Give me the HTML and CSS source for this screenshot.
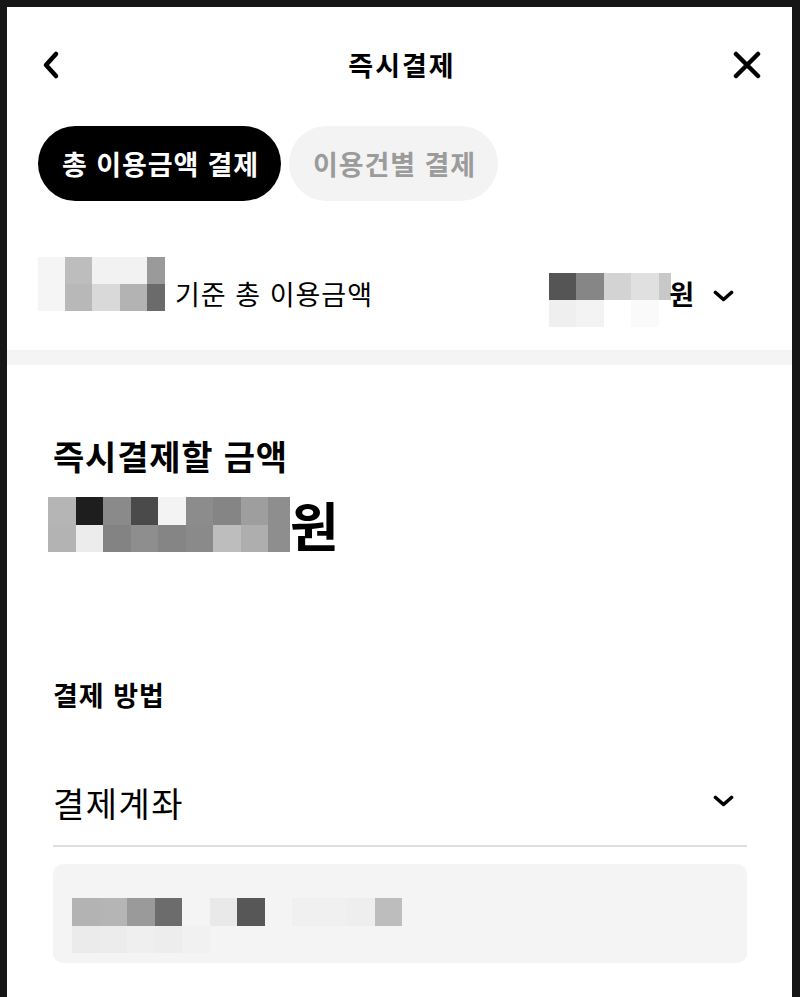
FILE: index.html
```html
<!DOCTYPE html>
<html lang="ko">
<head>
<meta charset="utf-8">
<title>즉시결제</title>
<link rel="stylesheet" href="styles.css">
</head>
<body>
<div class="app">
  <header class="topbar">
    <button class="icon-btn back" aria-label="뒤로">
      <svg width="20" height="30" viewBox="0 0 20 30"><polyline points="15,4 5,15 15,26" fill="none" stroke="#000" stroke-width="4.5" stroke-linecap="round" stroke-linejoin="round"/></svg>
    </button>
    <h1 class="title">즉시결제</h1>
    <button class="icon-btn close" aria-label="닫기">
      <svg width="28" height="28" viewBox="0 0 28 28"><path d="M3 3 L25 25 M25 3 L3 25" fill="none" stroke="#000" stroke-width="4.5" stroke-linecap="round"/></svg>
    </button>
  </header>

  <div class="tabs">
    <button class="tab active">총 이용금액 결제</button>
    <button class="tab">이용건별 결제</button>
  </div>

  <div class="total-row">
    <div class="total-left">
      <div class="mosaic mosaic-date">
        <i class="g-f5"></i><i class="g-bd"></i><i class="g-f2"></i><i class="g-f2"></i><i class="g-9a"></i>
        <i class="g-f5"></i><i class="g-b8"></i><i class="g-d9"></i><i class="g-b3"></i><i class="g-6b"></i>
      </div>
      <span class="total-label">기준 총 이용금액</span>
    </div>
    <div class="total-right">
      <div class="mosaic mosaic-total">
        <i class="g-55"></i><i class="g-86"></i><i class="g-d3"></i><i class="g-e0"></i><i class="g-c8"></i>
        <i class="g-ef"></i><i class="g-f3"></i><i></i><i class="g-fa"></i><i></i>
      </div>
      <span class="total-won">원</span>
      <svg class="chev" width="21" height="12" viewBox="0 0 21 12"><polyline points="2.5,2.5 10.5,9.5 18.5,2.5" fill="none" stroke="#000" stroke-width="3.6" stroke-linecap="round" stroke-linejoin="round"/></svg>
    </div>
  </div>

  <div class="divider"></div>

  <section class="pay">
    <h2 class="pay-title">즉시결제할 금액</h2>
    <div class="amount">
      <div class="mosaic mosaic-amount">
        <i class="g-b5"></i><i class="g-1e"></i><i class="g-8a"></i><i class="g-4a"></i><i class="g-f3"></i><i class="g-8c"></i><i class="g-85"></i><i class="g-9e"></i><i class="g-8e"></i>
        <i class="g-b3"></i><i class="g-ec"></i><i class="g-83"></i><i class="g-8e"></i><i class="g-85"></i><i class="g-8a"></i><i class="g-bd"></i><i class="g-ae"></i><i class="g-8e"></i>
      </div>
      <span class="amount-won">원</span>
    </div>

    <h3 class="method-title">결제 방법</h3>
    <div class="select">
      <span class="select-label">결제계좌</span>
      <svg class="chev" width="21" height="12" viewBox="0 0 21 12"><polyline points="2.5,2.5 10.5,9.5 18.5,2.5" fill="none" stroke="#000" stroke-width="3.6" stroke-linecap="round" stroke-linejoin="round"/></svg>
    </div>

    <div class="account-box">
      <div class="mosaic mosaic-account">
        <i class="g-b3"></i><i class="g-b5"></i><i class="g-9a"></i><i class="g-6c"></i><i></i><i class="g-e9"></i><i class="g-57"></i><i></i><i class="g-f0"></i><i class="g-f0"></i><i class="g-ee"></i><i class="g-bd"></i>
        <i class="g-eb"></i><i class="g-ec"></i><i class="g-ef"></i><i class="g-ed"></i><i class="g-f1"></i><i></i><i></i><i></i><i></i><i></i><i></i><i></i>
      </div>
    </div>
  </section>
</div>
</body>
</html>
```

FILE: styles.css
```css
* { box-sizing: border-box; margin: 0; padding: 0; }

html, body {
  background: #161616;
}

body {
  padding: 7px 8px 0 7px;
  font-family: "Noto Sans CJK KR", "Noto Sans", sans-serif;
  color: #000;
}

.app {
  background: #fff;
  min-height: 990px;
}

/* header */
.topbar {
  height: 116px;
  display: grid;
  grid-template-columns: 1fr auto 1fr;
  align-items: center;
  padding: 0 31px 0 34px;
}

.icon-btn {
  background: none;
  border: 0;
  display: flex;
  align-items: center;
}

.icon-btn svg { display: block; }

.close { justify-self: end; }

.title {
  font-size: 27px;
  font-weight: 700;
  line-height: 36px;
  letter-spacing: 2px;
  margin-right: -2px;
}

/* tabs */
.tabs {
  display: flex;
  gap: 8px;
  padding: 0 31px;
  margin-top: 3px;
}

.tab {
  height: 75px;
  border: 0;
  border-radius: 38px;
  padding: 0 22px 0 24px;
  font-family: inherit;
  font-size: 27px;
  font-weight: 700;
  letter-spacing: 0.9px;
  background: #f3f3f3;
  color: #9b9b9b;
}

.tab.active {
  background: #000;
  color: #fff;
}

/* total row */
.total-row {
  height: 149px;
  display: flex;
  justify-content: space-between;
  align-items: flex-start;
  padding: 0 58px 0 31px;
}

.total-left {
  display: flex;
  align-items: flex-start;
  margin-top: 56px;
}

.total-label {
  font-size: 27px;
  line-height: 36px;
  letter-spacing: 1px;
  margin-top: 19px;
  margin-left: 10px;
}

.total-right {
  display: flex;
  align-items: flex-start;
  margin-top: 72px;
}

.total-won {
  font-size: 27px;
  font-weight: 700;
  line-height: 36px;
  margin-top: 3px;
  margin-left: -2px;
}

.total-right .chev {
  margin-top: 17px;
  margin-left: 19px;
}

.divider {
  height: 15px;
  background: #f4f4f4;
}

/* pay section */
.pay {
  padding: 69px 45px 0 46px;
}

.pay-title {
  font-size: 34px;
  font-weight: 700;
  line-height: 44px;
  letter-spacing: 0.8px;
}

.amount {
  display: flex;
  align-items: center;
  margin-top: 16px;
}

.mosaic-amount { margin-left: -5px; }

.amount-won {
  font-size: 53px;
  font-weight: 700;
  line-height: 60px;
  margin-left: 0;
}

.method-title {
  margin-top: 123px;
  font-size: 27px;
  font-weight: 700;
  line-height: 36px;
  letter-spacing: 1px;
}

.select {
  margin-top: 68px;
  display: flex;
  justify-content: space-between;
  align-items: center;
  padding-bottom: 20px;
  border-bottom: 2px solid #dedede;
}

.select-label {
  font-size: 34px;
  line-height: 44px;
  letter-spacing: 1.5px;
}

.select .chev {
  margin-right: 13px;
  margin-top: -4px;
}

.account-box {
  margin-top: 17px;
  background: #f4f4f4;
  border-radius: 10px;
  padding: 34px 19px 10px;
}

/* mosaics (pixelated masked values) */
.mosaic {
  display: grid;
  flex: none;
}

.mosaic-date {
  grid-template-columns: 27px 27px 28px 27px 18px;
  grid-template-rows: 27px 27px;
}

.mosaic-total {
  grid-template-columns: 27px 28px 27px 28px 12px;
  grid-template-rows: 27px 27px;
}

.mosaic-amount {
  grid-template-columns: 28px 27px 28px 27px 28px 27px 28px 27px 22px;
  grid-template-rows: 28px 27px;
}

.mosaic-account {
  grid-template-columns: repeat(12, 27.5px);
  grid-template-rows: 27.5px 27.5px;
}

.g-1e { background: #1e1e1e; }
.g-4a { background: #4a4a4a; }
.g-55 { background: #555555; }
.g-57 { background: #575757; }
.g-6b { background: #6b6b6b; }
.g-6c { background: #6c6c6c; }
.g-83 { background: #838383; }
.g-85 { background: #858585; }
.g-86 { background: #868686; }
.g-8a { background: #8a8a8a; }
.g-8c { background: #8c8c8c; }
.g-8e { background: #8e8e8e; }
.g-9a { background: #9a9a9a; }
.g-9e { background: #9e9e9e; }
.g-ae { background: #aeaeae; }
.g-b3 { background: #b3b3b3; }
.g-b5 { background: #b5b5b5; }
.g-b8 { background: #b8b8b8; }
.g-bd { background: #bdbdbd; }
.g-c8 { background: #c8c8c8; }
.g-d3 { background: #d3d3d3; }
.g-d9 { background: #d9d9d9; }
.g-e0 { background: #e0e0e0; }
.g-e9 { background: #e9e9e9; }
.g-eb { background: #ebebeb; }
.g-ec { background: #ececec; }
.g-ed { background: #ededed; }
.g-ee { background: #eeeeee; }
.g-ef { background: #efefef; }
.g-f0 { background: #f0f0f0; }
.g-f1 { background: #f1f1f1; }
.g-f2 { background: #f2f2f2; }
.g-f3 { background: #f3f3f3; }
.g-f5 { background: #f5f5f5; }
.g-fa { background: #fafafa; }
```
